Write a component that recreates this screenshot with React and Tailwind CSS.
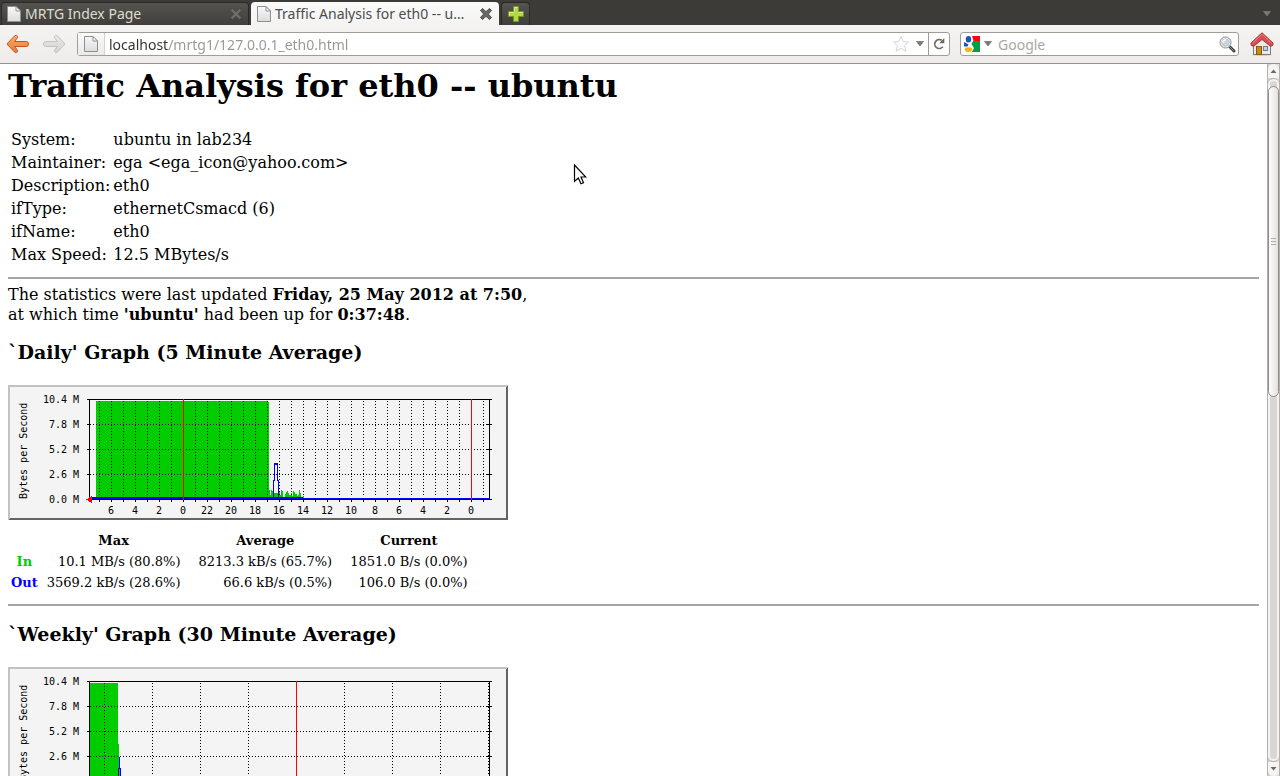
import React from 'react';

const UI = "font-['Noto_Sans','Open_Sans',sans-serif]";

function PageIcon() {
  return (
    <svg width="16" height="16" viewBox="0 0 16 16" className="shrink-0" aria-hidden="true">
      <defs>
        <linearGradient id="sheet" x1="0" y1="0" x2="0" y2="1">
          <stop offset="0" stopColor="#f8f8f8" />
          <stop offset="1" stopColor="#dcdcdc" />
        </linearGradient>
      </defs>
      <path d="M1.500 .5H10L14.500 5V15.500H1.500Z" fill="url(#sheet)" stroke="#8f8f8d" />
      <path d="M10 .5V5H14.500Z" fill="#fff" stroke="#8f8f8d" strokeLinejoin="round" />
    </svg>
  );
}

function Cross({ fill, stroke }) {
  return (
    <svg width="14" height="14" viewBox="0 0 14 14" aria-hidden="true">
      <path
        d="M1.500 3.500 3.500 1.500 7 4.700 10.500 1.500 12.500 3.500 9.300 7 12.500 10.500 10.500 12.500 7 9.300 3.500 12.500 1.500 10.500 4.700 7Z"
        fill={fill}
        stroke={stroke}
        strokeWidth="1"
        strokeLinejoin="round"
      />
    </svg>
  );
}

function Arrow({ id, from, to, stroke, flip }) {
  return (
    <svg width="24" height="20" viewBox="0 0 24 20" aria-hidden="true">
      <defs>
        <linearGradient id={id} x1="0" y1="0" x2="0" y2="1">
          <stop offset="0" stopColor={from} />
          <stop offset="1" stopColor={to} />
        </linearGradient>
      </defs>
      <path
        d="M9 1.500Q10.500 .8 11.500 2.300Q12 3.300 11.200 4.200L8.500 7.500H20.500Q22.500 7.700 22.500 10Q22.500 12.300 20.500 12.500H8.500L11.200 15.800Q12 16.700 11.500 17.700Q10.500 19.200 9 18.500L1.800 11Q1 10 1.800 9Z"
        fill={`url(#${id})`}
        stroke={stroke}
        transform={flip ? 'translate(24 0) scale(-1 1)' : undefined}
      />
    </svg>
  );
}

function Triangle({ fill }) {
  return (
    <svg width="8" height="6" viewBox="0 0 8 6" aria-hidden="true">
      <path d="M.5 .5H7.500L4 5Z" fill={fill} stroke={fill} strokeWidth=".8" />
    </svg>
  );
}

function TabBar() {
  return (
    <div role="tablist" className="flex h-[25px] items-end bg-[#3c3b37] pl-px">
      <div className="flex h-[23px] w-[248px] items-center rounded-t border border-b-0 border-[#2a2926] bg-linear-to-b from-[#55544f] to-[#3f3e3a] pl-[4px] pr-[5px]">
        <PageIcon />
        <button role="tab" aria-selected="false" className="ml-[3px] flex-1 text-left text-[14px] leading-5 whitespace-nowrap text-[#dfdbd2]">
          MRTG Index Page
        </button>
        <button aria-label="Close tab">
          <Cross fill="#6d6c68" stroke="#4a4945" />
        </button>
      </div>
      <div className="ml-[2px] flex h-[23px] w-[248px] items-center rounded-t bg-linear-to-b from-[#fbfafa] to-[#f4f3f2] pl-[5px] pr-[6px]">
        <PageIcon />
        <button role="tab" aria-selected="true" className="ml-[3px] text-left text-[14px] leading-5 whitespace-nowrap text-[#4c4c4c]">
          Traffic Analysis for eth0 -- u…
        </button>
        <button aria-label="Close tab" className="ml-auto">
          <Cross fill="#6b6a67" stroke="#4c4b48" />
        </button>
      </div>
      <button aria-label="New tab" className="ml-[2px] flex h-[23px] w-[29px] items-center justify-center rounded-t border border-b-0 border-[#2a2926] bg-linear-to-b from-[#55544f] to-[#3f3e3a]">
        <svg width="16" height="16" viewBox="0 0 16 16" aria-hidden="true">
          <path d="M5.500 .5H10.500V5.500H15.500V10.500H10.500V15.500H5.500V10.500H.5V5.500H5.500Z" fill="#b5d944" stroke="#6f9a1c" />
          <path d="M6.500 5.500V1.500H9.500M1.500 9.500V6.500H6.500M10.500 6.500H14.500" fill="none" stroke="#d8ec8c" />
        </svg>
      </button>
      <button aria-label="List all tabs" className="mr-[9px] ml-auto flex h-[23px] items-center">
        <Triangle fill="#787773" />
      </button>
    </div>
  );
}

function GoogleIcon() {
  return (
    <svg width="16" height="16" viewBox="0 0 16 16" aria-hidden="true">
      <rect width="16" height="16" fill="#fff" />
      <path d="M8 0H16V5H9.500Z" fill="#f40b08" />
      <path d="M9 5H16V16H8L10 12 7.500 8Z" fill="#0b9a45" />
      <path d="M0 6 4.500 8.500 3.500 10.500H0Z" fill="#1a52b8" />
      <ellipse cx="4.500" cy="3.200" rx="2.700" ry="3.200" fill="#1558c0" />
      <ellipse cx="4.500" cy="13.600" rx="3.800" ry="2.400" fill="#f3b40f" />
    </svg>
  );
}

function NavBar() {
  return (
    <div className="flex h-[39px] items-center border-b border-[#979491] bg-linear-to-b from-[#f4f3f2] to-[#efedeb] pl-[6px] pr-[6px]">
      <button aria-label="Back">
        <Arrow id="back" from="#f6b06a" to="#e8793a" stroke="#cf4f22" />
      </button>
      <button aria-label="Forward" className="ml-[12px]">
        <Arrow id="forward" from="#e9e8e6" to="#d6d4d1" stroke="#c4c2bf" flip />
      </button>
      <form className="ml-[11px] flex h-[24px] min-w-0 flex-1 items-stretch rounded-[3px] border border-[#a09d99] bg-white">
        <span className="flex w-[27px] items-center justify-center border-r border-[#d5d3d1] bg-linear-to-b from-[#fafafa] to-[#ebeae9]">
          <PageIcon />
        </span>
        <input
          type="text"
          aria-label="Address"
          defaultValue="localhost/mrtg1/127.0.0.1_eth0.html"
          className="min-w-0 flex-1 bg-[linear-gradient(to_right,#33312f_64px,#999693_64px)] bg-clip-text pl-[4px] text-[14px] text-transparent caret-black outline-none"
        />
        <button type="button" aria-label="Bookmark this page" className="px-[6px]">
          <svg width="18" height="18" viewBox="0 0 18 18" aria-hidden="true">
            <path d="M9 1.500 11.300 6.500 16.500 7 12.600 10.600 14 16.300 9 13.300 4 16.300 5.400 10.600 1.500 7 6.700 6.500Z" fill="#fdfdfd" stroke="#d6d6d6" strokeLinejoin="round" />
          </svg>
        </button>
        <button type="button" aria-label="Show history" className="pr-[4px]">
          <Triangle fill="#7a7875" />
        </button>
        <button type="button" aria-label="Reload" className="flex w-[21px] items-center justify-center border-l border-[#a09d99]">
          <svg width="14" height="14" viewBox="0 0 14 14" aria-hidden="true">
            <path d="M9.800 3.300A4.500 4.500 0 1 0 10.800 9.800" fill="none" stroke="#6e6959" strokeWidth="1.700" />
            <path d="M12.300 1V6.200H7.200Z" fill="#6e6959" />
          </svg>
        </button>
      </form>
      <form className="ml-[10px] flex h-[24px] w-[279px] items-center rounded-[3px] border border-[#a09d99] bg-white pl-[3px] pr-[2px]">
        <button type="button" aria-label="Choose search engine" className="flex items-center gap-[4px]">
          <GoogleIcon />
          <Triangle fill="#7a7875" />
        </button>
        <input
          type="search"
          aria-label="Search"
          placeholder="Google"
          className="ml-[6px] min-w-0 flex-1 bg-transparent text-[14px] outline-none placeholder:text-[#aaa7a4]"
        />
        <button type="button" aria-label="Search">
          <svg width="17" height="17" viewBox="0 0 17 17" aria-hidden="true">
            <path d="M10.500 10.500 15 15" stroke="#3f403e" strokeWidth="3" strokeLinecap="round" />
            <path d="M11 11 14.500 14.500" stroke="#8f918d" strokeWidth="1" strokeLinecap="round" />
            <circle cx="6.500" cy="6.500" r="5.500" fill="#f4f6f8" stroke="#8a8c88" />
            <circle cx="6.500" cy="6.500" r="3.800" fill="#c7d6e4" stroke="#a9b6c2" strokeWidth=".7" />
            <path d="M4 6.500A2.700 2.700 0 0 1 7 3.700" fill="none" stroke="#fff" strokeWidth="1.500" />
          </svg>
        </button>
      </form>
      <button aria-label="Home" className="ml-[11px]">
        <svg width="24" height="24" viewBox="0 0 24 24" aria-hidden="true">
          <ellipse cx="12" cy="22.700" rx="10" ry="1" fill="#c9c7c4" />
          <path d="M3.500 11 12 5 20.500 11V22.500H3.500Z" fill="#eceae8" stroke="#7c7a77" />
          <rect x="6.500" y="14.500" width="5" height="8" fill="#c98a1c" stroke="#8f5902" />
          <rect x="13.500" y="14.500" width="4" height="4" fill="#bcd3e6" stroke="#6b7f8f" />
          <path d="M12 .8 23 11Q23.200 13.200 22 14H20L12 7.500 4 14H2Q.8 13.200 1 11Z" fill="#d64f54" stroke="#a83236" strokeLinejoin="round" />
          <path d="M2.500 11 12 2.300 21.500 11" fill="none" stroke="#e88387" />
        </svg>
      </button>
    </div>
  );
}

const Y_LABELS = ['10.4 M', '7.8 M', '5.2 M', '2.6 M', '0.0 M'];

function Graph({ title, gridX, redX, labels, area, line }) {
  return (
    <svg width="500" height="135" viewBox="0 0 500 135" role="img" aria-label={title} className="block" shapeRendering="crispEdges">
      <rect width="500" height="135" fill="#f4f4f4" />
      <path d="M0 0H500L498 2H2V133L0 135Z" fill="#c2c2c2" />
      <path d="M500 0V135H0L2 133H498V2Z" fill="#646464" />
      <g fill="#00cc00">{area}</g>
      <g stroke="#000">
        <path d="M81.500 14V115M481.500 14V115M79 14.500H484M79 114.500H484" fill="none" />
        {[39, 64, 89].map((y) => (
          <g key={y}>
            <path d={`M82 ${y}.500H481`} strokeDasharray="1 2" />
            <path d={`M79 ${y}.500H83M479 ${y}.500H484`} />
          </g>
        ))}
        {gridX.map((x) => (
          <g key={x}>
            <path d={`M${x}.500 16V112`} strokeDasharray="1 2" />
            <path d={`M${x}.500 114V117`} />
          </g>
        ))}
      </g>
      <g fill="#0000ff">{line}</g>
      {redX.map((x) => (
        <path key={x} d={`M${x}.500 14V115`} stroke="#f00" />
      ))}
      <path d="M78 114.500 84 111V118Z" fill="#f00" />
      <g className="font-['DejaVu_Sans_Mono',monospace] text-[10px]" fill="#000">
        {Y_LABELS.map((t, i) => (
          <text key={t} x="71" y={18 + i * 25} textAnchor="end">
            {t}
          </text>
        ))}
        {labels.map(([x, t]) => (
          <text key={x} x={x} y="129" textAnchor="middle">
            {t}
          </text>
        ))}
        <text transform="translate(19 114) rotate(-90)">Bytes per Second</text>
      </g>
    </svg>
  );
}

const HOURS = ['6', '4', '2', '0', '22', '20', '18', '16', '14', '12', '10', '8', '6', '4', '2', '0'];
const HOUR_GRID = Array.from({ length: 33 }, (_, i) => 91 + i * 12);
const NOISE = [
  [261, 9], [262, 4], [263, 9], [264, 8], [265, 6], [266, 6], [267, 6], [268, 6], [269, 6], [270, 6],
  [271, 8], [272, 4], [273, 9], [274, 8], [277, 5], [278, 7], [279, 8], [280, 6], [281, 4], [282, 4],
  [283, 6], [284, 3], [285, 8], [286, 7], [287, 5], [288, 5], [289, 3], [290, 4], [291, 9], [292, 6], [295, 3],
];

function DailyGraph() {
  return (
    <Graph
      title="Daily traffic graph"
      gridX={HOUR_GRID}
      redX={[175, 463]}
      labels={HOURS.map((t, i) => [103 + i * 24, t])}
      area={
        <>
          <path d="M88 16H260V17H261V114H88Z" />
          {NOISE.map(([x, h]) => (
            <rect key={x} x={x} y={114 - h} width="1" height={h} />
          ))}
        </>
      }
      line={
        <>
          <path d="M82 112H295V113H482V114H82Z" />
          <path d="M265 113V95H266V78H270V95H271V113H270V96H269V80H267V96H266V113Z" />
        </>
      }
    />
  );
}

function WeeklyGraph() {
  return (
    <Graph
      title="Weekly traffic graph"
      gridX={[96, 144, 192, 240, 336, 384, 432, 480]}
      redX={[288]}
      labels={[[120, 'Fri'], [168, 'Thu'], [216, 'Wed'], [264, 'Tue'], [312, 'Mon'], [360, 'Sun'], [408, 'Sat']]}
      area={<path d="M82 16H110V77H111V90H112V114H82Z" />}
      line={
        <>
          <path d="M111 90H112V101H113V113H112V102H111V113H110V101H111Z" />
          <path d="M82 112H130V113H482V114H82Z" />
        </>
      }
    />
  );
}

const INFO = [
  ['System:', 'ubuntu in lab234'],
  ['Maintainer:', 'ega <ega_icon@yahoo.com>'],
  ['Description:', 'eth0'],
  ['ifType:', 'ethernetCsmacd (6)'],
  ['ifName:', 'eth0'],
  ['Max Speed:', '12.5 MBytes/s'],
];

function InfoTable() {
  return (
    <table className="ml-[3px] mt-[23px] text-[16px] leading-[23px]">
      <tbody>
        {INFO.map(([k, v]) => (
          <tr key={k}>
            <th scope="row" className="p-0 pr-[3px] text-left font-normal">{k}</th>
            <td className="p-0">{v}</td>
          </tr>
        ))}
      </tbody>
    </table>
  );
}

function TrafficTable() {
  return (
    <table className="ml-[3px] mt-[10px] text-[13px] leading-[21px]">
      <thead>
        <tr>
          <td />
          <th scope="col" className="p-0 pl-[9px]">Max</th>
          <th scope="col" className="p-0 pl-[18px]">Average</th>
          <th scope="col" className="p-0 pl-[18px]">Current</th>
        </tr>
      </thead>
      <tbody className="text-right">
        <tr>
          <th scope="row" className="p-0 text-center text-[#00cc00]">In</th>
          <td className="p-0 pl-[9px]">10.1 MB/s (80.8%)</td>
          <td className="p-0 pl-[18px]">8213.3 kB/s (65.7%)</td>
          <td className="p-0 pl-[18px]">1851.0 B/s (0.0%)</td>
        </tr>
        <tr>
          <th scope="row" className="p-0 text-center text-[#0000ff]">Out</th>
          <td className="p-0 pl-[9px]">3569.2 kB/s (28.6%)</td>
          <td className="p-0 pl-[18px]">66.6 kB/s (0.5%)</td>
          <td className="p-0 pl-[18px]">106.0 B/s (0.0%)</td>
        </tr>
      </tbody>
    </table>
  );
}

function ScrollBar() {
  return (
    <div className="flex w-[13px] shrink-0 flex-col border-x border-[#b5b1ad] bg-linear-to-r from-[#d3d0cd] to-[#e2e0de]">
      <button aria-label="Scroll up" className="flex h-[14px] items-center justify-center rounded-t-full bg-[#f5f4f3]">
        <svg width="7" height="4" viewBox="0 0 7 4" aria-hidden="true"><path d="M.5 4H6.500L3.500 .5Z" fill="#6d6a66" /></svg>
      </button>
      <div className="flex min-h-0 flex-1 flex-col rounded-full border-y border-[#b5b1ad] bg-[#d9d6d3] pt-[7px] ring-2 ring-[#f5f4f3] ring-inset">
        <div className="flex h-[311px] flex-col items-center justify-center gap-[2px] rounded-full border border-[#8f8c88] bg-linear-to-r from-[#fdfdfd] to-[#e4e2e0]">
          <span className="h-px w-[5px] bg-[#b0adaa]" />
          <span className="h-px w-[5px] bg-[#b0adaa]" />
          <span className="h-px w-[5px] bg-[#b0adaa]" />
        </div>
      </div>
      <button aria-label="Scroll down" className="flex h-[14px] items-center justify-center rounded-b-full bg-[#f5f4f3]">
        <svg width="7" height="4" viewBox="0 0 7 4" aria-hidden="true"><path d="M.5 0H6.500L3.500 3.500Z" fill="#6d6a66" /></svg>
      </button>
    </div>
  );
}

export default function App() {
  return (
    <div className="relative flex h-screen flex-col overflow-hidden bg-white">
      <header className={UI}>
        <TabBar />
        <NavBar />
      </header>
      <div className="flex min-h-0 flex-1">
        <main className="min-w-0 flex-1 overflow-hidden px-[8px] pt-[3px] font-['DejaVu_Serif',serif] text-black">
          <h1 className="text-[32px] leading-[38px] font-bold">Traffic Analysis for eth0 -- ubuntu</h1>
          <InfoTable />
          <hr className="mt-[11px] border-t-2 border-[#a5a5a5]" />
          <p className="mt-[6px] text-[16px] leading-5">
            The statistics were last updated <strong>Friday, 25 May 2012 at 7:50</strong>,
            <br />
            at which time <strong>'ubuntu'</strong> had been up for <strong>0:37:48</strong>.
          </p>
          <h2 className="mt-[15px] mb-[21px] text-[19px] leading-6 font-bold">`Daily' Graph (5 Minute Average)</h2>
          <DailyGraph />
          <TrafficTable />
          <hr className="mt-[11px] border-t-2 border-[#a5a5a5]" />
          <h2 className="mt-[16px] mb-[21px] text-[19px] leading-6 font-bold">`Weekly' Graph (30 Minute Average)</h2>
          <WeeklyGraph />
        </main>
        <ScrollBar />
      </div>
      <svg width="14" height="22" viewBox="0 0 14 22" aria-hidden="true" className="pointer-events-none absolute left-[573px] top-[164px]">
        <path d="M1.500 1V17.500L5.300 14 8 19.800 10.500 18.700 8 13H12.800Z" fill="#fff" stroke="#000" strokeWidth="1.200" />
      </svg>
    </div>
  );
}
